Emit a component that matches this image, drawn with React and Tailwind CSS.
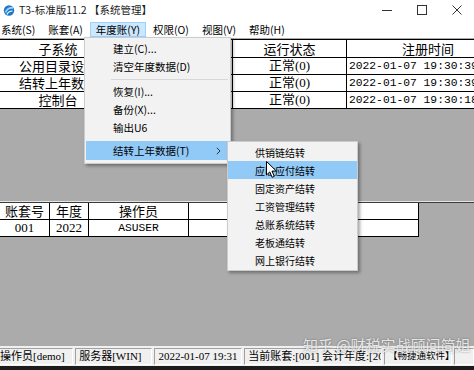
import { Fragment } from "react";

const sans = "font-[family-name:Noto_Sans_CJK_SC,sans-serif]";
const serif = "font-[family-name:Liberation_Serif,Noto_Sans_CJK_SC,serif]";
const mono = "font-[family-name:Liberation_Mono,Noto_Sans_CJK_SC,monospace]";

const menus = ["系统(S)", "账套(A)", "年度账(Y)", "权限(O)", "视图(V)", "帮助(H)"];

const sysRows = [
  ["公用目录设置", "正常(0)", "2022-01-07 19:30:39"],
  ["结转上年数据", "正常(0)", "2022-01-07 19:30:39"],
  ["控制台", "正常(0)", "2022-01-07 19:30:18"],
];

const subItems = ["供销链结转", "应收应付结转", "固定资产结转", "工资管理结转", "总账系统结转", "老板通结转", "网上银行结转"];

function Cell({ children, h = "h-[17px]", className = "" }) {
  return (
    <div className={`${h} border-r border-b border-black flex items-center justify-center overflow-hidden whitespace-nowrap ${className}`}>
      {children}
    </div>
  );
}

function AppIcon() {
  return (
    <svg width="12" height="12" viewBox="0 0 12 12">
      <circle cx="6" cy="6.5" r="5.2" fill="#1f78c8" />
      <path d="M2.5 8.5 C4 5 7 3.5 10 4" stroke="#9fd3ff" strokeWidth="1.6" fill="none" />
      <path d="M4 10.5 C5 8 7 7 9.5 7" stroke="#ffffff" strokeWidth="1.2" fill="none" />
    </svg>
  );
}

function Status({ w, children, className = "" }) {
  return (
    <div className={`${w} h-[17px] border-t border-l border-[#a0a0a0] border-b border-r border-b-white border-r-white flex items-center pl-[3px] overflow-hidden whitespace-nowrap ${className}`}>
      {children}
    </div>
  );
}

export default function App() {
  return (
    <div className={`relative w-[474px] h-[370px] overflow-hidden flex flex-col bg-white text-black ${sans}`}>
      {/* title bar */}
      <div className="h-[20px] flex items-center bg-white shrink-0">
        <div className="pl-[3px] pr-[4px] flex items-center"><AppIcon /></div>
        <span className="text-[10.5px] text-[#1a1a1a]">T3-标准版11.2 【系统管理】</span>
        <div className="ml-auto flex h-full">
          <div className="w-[35px] flex items-center justify-center">
            <svg width="10" height="10" viewBox="0 0 10 10"><path d="M0 5.5 H10" stroke="#333" strokeWidth="1" /></svg>
          </div>
          <div className="w-[35px] flex items-center justify-center">
            <svg width="10" height="10" viewBox="0 0 10 10"><rect x="0.5" y="0.5" width="9" height="9" stroke="#333" strokeWidth="1" fill="none" /></svg>
          </div>
          <div className="w-[35px] flex items-center justify-center">
            <svg width="10" height="10" viewBox="0 0 10 10"><path d="M0.5 0.5 L9.5 9.5 M9.5 0.5 L0.5 9.5" stroke="#333" strokeWidth="1" /></svg>
          </div>
        </div>
      </div>

      {/* menu bar */}
      <div className="h-[18px] flex items-end gap-[1px] -ml-[5px] bg-white shrink-0 pb-[1px]">
        {menus.map((m) => (
          <div
            key={m}
            className={`h-[15px] px-[5px] flex items-center text-[10.5px] whitespace-nowrap ${m === "年度账(Y)" ? "bg-[#cce8ff] border border-[#99d1ff]" : "border border-transparent"}`}
          >
            {m}
          </div>
        ))}
      </div>

      {/* work area */}
      <div className="flex-1 bg-[#ababab] flex flex-col">
        <div className="mt-[1px] -ml-px w-[510px] grid grid-cols-[117px_116px_114px_163px] border-t border-l border-black bg-white">
          <Cell h="h-[18px]" className="text-[13px]">子系统</Cell>
          <Cell h="h-[18px]" className="text-[13px]">站点</Cell>
          <Cell h="h-[18px]" className="text-[13px]">运行状态</Cell>
          <Cell h="h-[18px]" className="text-[13px]">注册时间</Cell>
          {sysRows.map((r) => (
            <Fragment key={r[0]}>
              <Cell className="text-[13px]">{r[0]}</Cell>
              <Cell className="text-[13px]"></Cell>
              <Cell className={`text-[13px] ${serif}`}>{r[1]}</Cell>
              <Cell className={`text-[11.3px] justify-start pl-[2px] ${mono}`}>{r[2]}</Cell>
            </Fragment>
          ))}
        </div>

        <div className="h-[92px]" />
        <div className="h-px bg-[#e4e4e4]" />
        <div className="border-t border-[#3a3a3a]">
          <div className="-ml-px w-[419px] grid grid-cols-[50px_39px_100px_230px] border-l border-black bg-white">
            <Cell className="text-[13px]">账套号</Cell>
            <Cell className="text-[13px]">年度</Cell>
            <Cell className="text-[13px]">操作员</Cell>
            <Cell className="text-[13px]"></Cell>
            <Cell className={`text-[13px] ${serif}`}>001</Cell>
            <Cell className={`text-[13px] ${serif}`}>2022</Cell>
            <Cell className={`text-[11.3px] ${mono}`}>ASUSER</Cell>
            <Cell className="text-[13px]"></Cell>
          </div>
        </div>
      </div>

      {/* status bar */}
      <div className={`h-[20px] shrink-0 bg-[#f0f0f0] flex items-center gap-[2px] -ml-[4px] text-[11px] ${serif}`}>
        <Status w="w-[79px]">操作员[demo]</Status>
        <Status w="w-[79px]">服务器[WIN]</Status>
        <Status w="w-[90px]">2022-01-07 19:31</Status>
        <Status w="w-[141px]">当前账套:[001] 会计年度:[2022]</Status>
        <Status w="w-[70px]" className="text-[9.5px] pl-[1px]">【畅捷通软件】</Status>
        <Status w="w-[20px]"></Status>
      </div>
      <div className="h-[4px] shrink-0 bg-[#1c1c1c]" />

      {/* year-account dropdown */}
      <div className="absolute left-[84px] top-[37px] w-[147px] bg-[#f2f2f2] border border-[#cccccc] shadow-[2px_2px_3px_rgba(0,0,0,0.35)] pt-[2px] pb-[3px] text-[10.5px]">
        <div className="h-[18px] pl-[28px] flex items-center">建立(C)...</div>
        <div className="h-[18px] pl-[28px] flex items-center">清空年度数据(D)</div>
        <div className="h-[7px] pl-[26px] pr-[2px] flex items-center"><div className="h-px w-full bg-[#d7d7d7]" /></div>
        <div className="h-[18px] pl-[28px] flex items-center">恢复(I)...</div>
        <div className="h-[18px] pl-[28px] flex items-center">备份(X)...</div>
        <div className="h-[18px] pl-[28px] flex items-center">输出U6</div>
        <div className="h-[4px]" />
        <div className="h-[19px] ml-[1px] mr-[2px] pl-[27px] pr-[7px] flex items-center justify-between bg-[#91c9f7]">
          <span>结转上年数据(T)</span>
          <svg width="5" height="8" viewBox="0 0 5 8"><path d="M0.8 0.8 L4 4 L0.8 7.2" stroke="#333" strokeWidth="1" fill="none" /></svg>
        </div>
      </div>

      {/* transfer submenu */}
      <div className="absolute left-[227px] top-[141px] w-[131px] bg-[#f2f2f2] border border-[#cccccc] shadow-[2px_2px_3px_rgba(0,0,0,0.35)] py-[1px] text-[10px]">
        {subItems.map((s) => (
          <div key={s} className={`h-[18px] pl-[27px] flex items-center ${s === "应收应付结转" ? "bg-[#91c9f7]" : ""}`}>{s}</div>
        ))}
      </div>

      {/* mouse pointer */}
      <svg className="absolute left-[266px] top-[161px]" width="12" height="18" viewBox="0 0 12 18">
        <path d="M0.5 0.5 L0.5 14 L3.8 10.9 L6.1 16.3 L8.3 15.3 L6 10.1 L10.4 10.1 Z" fill="#fff" stroke="#000" strokeWidth="1" strokeLinejoin="round" />
      </svg>

      {/* watermark */}
      <div className="absolute left-[303px] top-[335px] text-[15px] leading-[20px] text-white/80 whitespace-nowrap [text-shadow:0_0_2px_rgba(0,0,0,0.45)]">
        知乎 @财税实战顾问简姐
      </div>
    </div>
  );
}
